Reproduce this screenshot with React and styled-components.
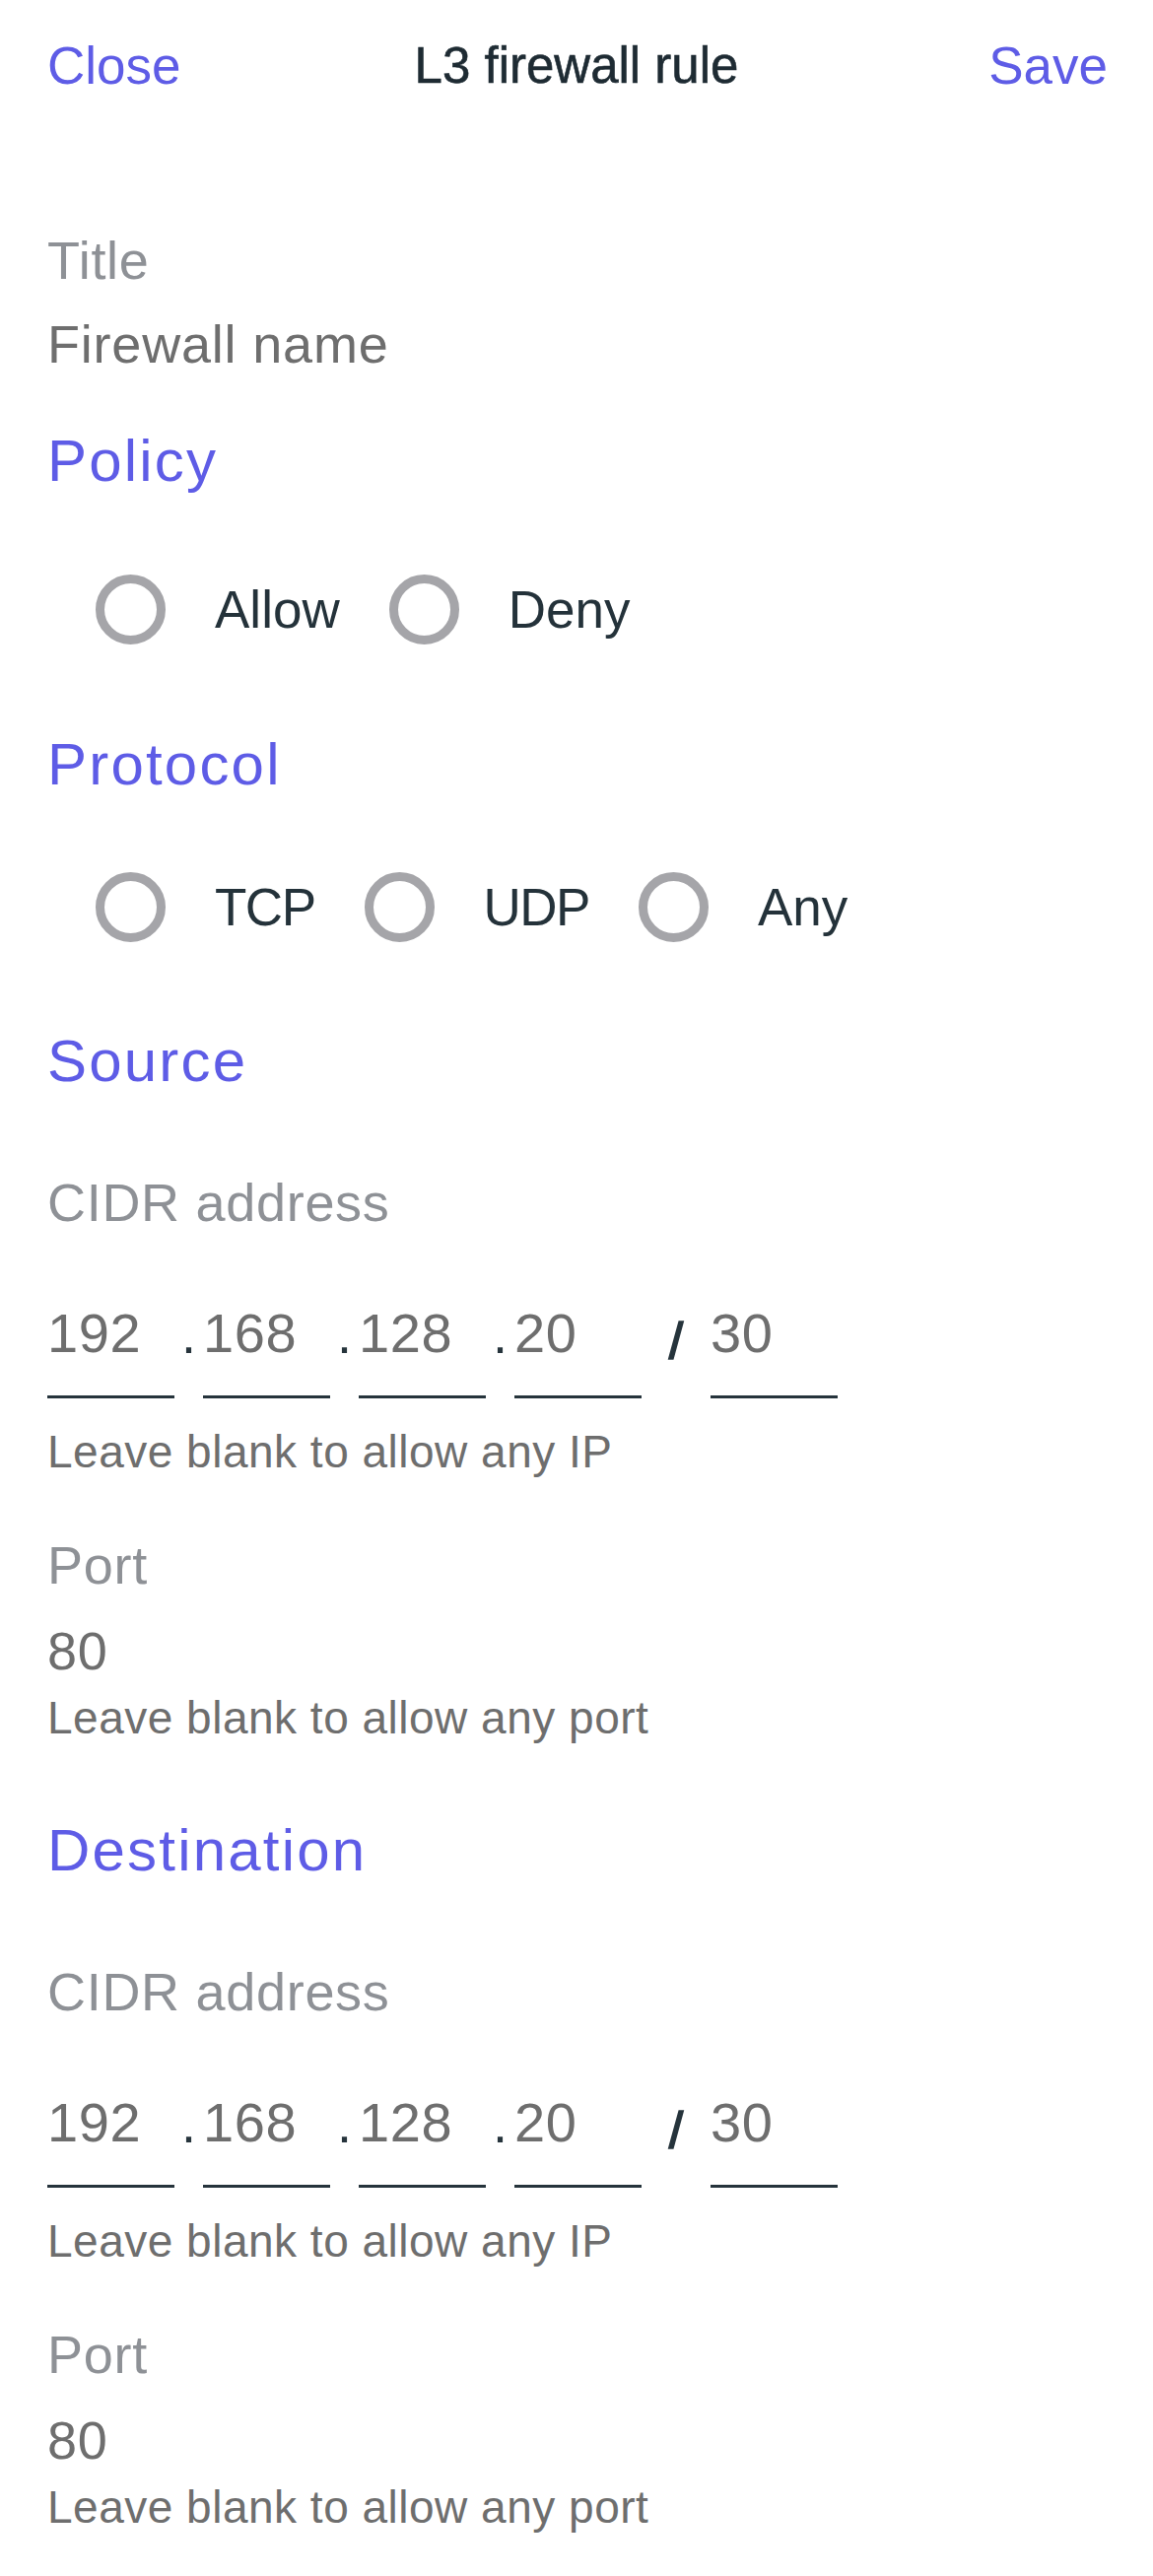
import React from "react";
import styled, { createGlobalStyle } from "styled-components";

const GlobalStyle = createGlobalStyle`
  html, body {
    margin: 0;
    padding: 0;
    background: #ffffff;
  }

  body {
    font-family: "Liberation Sans", Arial, sans-serif;
    -webkit-font-smoothing: antialiased;
  }

  * {
    box-sizing: border-box;
  }
`;

const colors = {
  accent: "#5e5ce6",
  heading: "#1e2b33",
  label: "#8e9196",
  value: "#6e6e6e",
  text: "#24323a",
  ring: "#a5a5a9",
  line: "#26343c",
};

const Page = styled.div`
  width: 1170px;
  min-height: 2614px;
  padding: 0 48px 40px 48px;
  background: #ffffff;
`;

const Header = styled.header`
  display: grid;
  grid-template-columns: 1fr auto 1fr;
  align-items: center;
  padding-top: 35px;
`;

const HeaderButton = styled.span`
  font-size: 53px;
  line-height: 64px;
  color: ${colors.accent};
  justify-self: ${(props) => (props.$end ? "end" : "start")};
  margin-right: ${(props) => (props.$end ? "-2px" : "0")};
`;

const HeaderTitle = styled.h1`
  margin: 0;
  font-size: 51px;
  line-height: 64px;
  font-weight: 400;
  color: ${colors.heading};
  -webkit-text-stroke: 0.6px ${colors.heading};
`;

const SectionTitle = styled.h2`
  margin: ${(props) => props.$top}px 0 0 0;
  font-size: 60px;
  line-height: 72px;
  font-weight: 400;
  letter-spacing: 2.2px;
  color: ${colors.accent};
`;

const FieldLabel = styled.div`
  margin-top: ${(props) => props.$top}px;
  font-size: 54px;
  line-height: 64px;
  letter-spacing: 0.7px;
  color: ${colors.label};
`;

const FieldValue = styled.div`
  margin-top: ${(props) => props.$top}px;
  font-size: 54px;
  line-height: 64px;
  letter-spacing: 0.8px;
  color: ${colors.value};
`;

const Hint = styled.div`
  margin-top: ${(props) => props.$top}px;
  font-size: 46px;
  line-height: 52px;
  letter-spacing: 0.5px;
  color: ${colors.value};
`;

const RadioGroup = styled.div`
  display: flex;
  align-items: center;
  gap: 50px;
  margin-top: ${(props) => props.$top}px;
  padding-left: 49px;
`;

const RadioOption = styled.label`
  display: flex;
  align-items: center;
  gap: 50px;
`;

const RadioCircle = styled.span`
  display: block;
  width: 71px;
  height: 71px;
  border: 9px solid ${colors.ring};
  border-radius: 50%;
`;

const RadioText = styled.span`
  font-size: 53px;
  line-height: 64px;
  letter-spacing: ${(props) => (props.$tight ? "-1.5px" : "0")};
  color: ${colors.text};
`;

const IpRow = styled.div`
  display: flex;
  align-items: flex-start;
  margin-top: ${(props) => props.$top}px;
`;

const IpInput = styled.div`
  width: 129px;
  padding-bottom: 31px;
  border-bottom: 3px solid ${colors.line};
  font-size: 56px;
  line-height: 64px;
  letter-spacing: 0.6px;
  color: ${colors.value};
`;

const IpSeparator = styled.span`
  width: ${(props) => (props.$wide ? 70 : 29)}px;
  text-align: center;
  font-size: ${(props) => (props.$wide ? 52 : 54)}px;
  line-height: 64px;
  color: ${colors.line};
  margin-top: ${(props) => (props.$wide ? 8 : 1)}px;
  -webkit-text-stroke: ${(props) => (props.$wide ? "1.6px" : "0")}
    ${colors.line};
`;

function Radio({ label, tight }) {
  return (
    <RadioOption>
      <RadioCircle />
      <RadioText $tight={tight}>{label}</RadioText>
    </RadioOption>
  );
}

function CidrField({ octets, mask }) {
  return (
    <IpRow $top={69}>
      {octets.map((octet, i) => (
        <React.Fragment key={i}>
          {i > 0 && <IpSeparator>.</IpSeparator>}
          <IpInput>{octet}</IpInput>
        </React.Fragment>
      ))}
      <IpSeparator $wide>/</IpSeparator>
      <IpInput>{mask}</IpInput>
    </IpRow>
  );
}

function Endpoint({ title, top }) {
  return (
    <section>
      <SectionTitle $top={top}>{title}</SectionTitle>
      <FieldLabel $top={75}>CIDR address</FieldLabel>
      <CidrField octets={["192", "168", "128", "20"]} mask="30" />
      <Hint $top={28}>Leave blank to allow any IP</Hint>
      <FieldLabel $top={57}>Port</FieldLabel>
      <FieldValue $top={23}>80</FieldValue>
      <Hint $top={10}>Leave blank to allow any port</Hint>
    </section>
  );
}

export default function App() {
  return (
    <>
      <GlobalStyle />
      <Page>
        <Header>
          <HeaderButton>Close</HeaderButton>
          <HeaderTitle>L3 firewall rule</HeaderTitle>
          <HeaderButton $end>Save</HeaderButton>
        </Header>

        <FieldLabel $top={133}>Title</FieldLabel>
        <FieldValue $top={21}>Firewall name</FieldValue>

        <SectionTitle $top={51}>Policy</SectionTitle>
        <RadioGroup $top={79}>
          <Radio label="Allow" />
          <Radio label="Deny" />
        </RadioGroup>

        <SectionTitle $top={86}>Protocol</SectionTitle>
        <RadioGroup $top={73}>
          <Radio label="TCP" tight />
          <Radio label="UDP" tight />
          <Radio label="Any" />
        </RadioGroup>

        <Endpoint title="Source" top={85} />
        <Endpoint title="Destination" top={73} />
      </Page>
    </>
  );
}
